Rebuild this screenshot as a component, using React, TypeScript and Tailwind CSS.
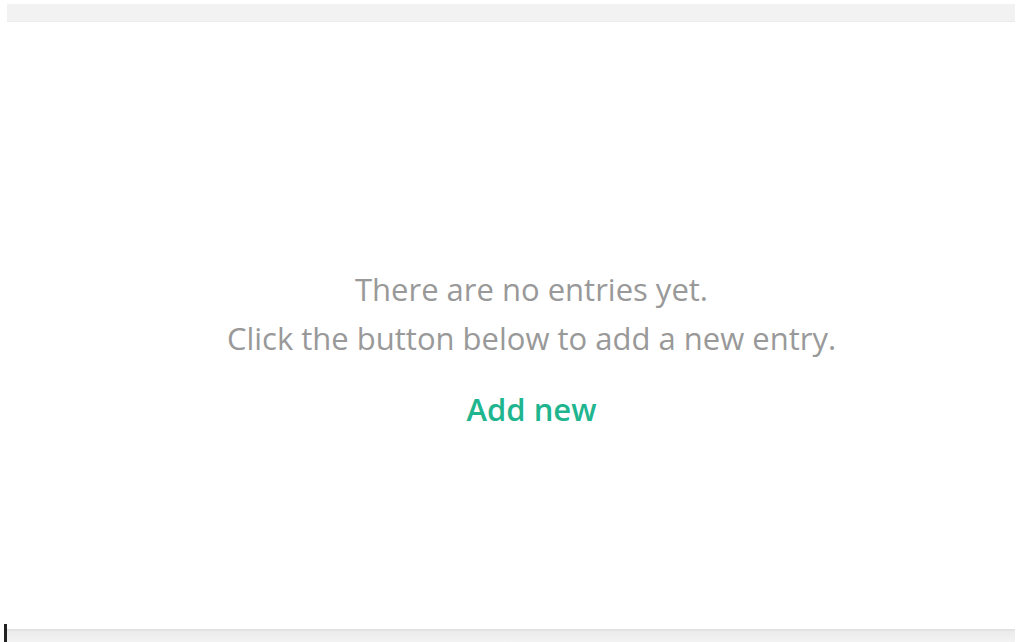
export default function App() {
  return (
    <div
      className="relative h-[642px] w-[1031px] overflow-hidden bg-white"
      style={{ fontFamily: '"Open Sans", sans-serif' }}
    >
      <div className="flex h-full flex-col pl-[7px] pr-[16px] pt-[4px]">
        <div className="h-[18px] shrink-0 border-b border-[#ececec] bg-[#f2f2f2]" />
        <div className="flex flex-1 flex-col items-center justify-center pl-[41px] pt-[47px] text-center">
          <p className="text-[31px] leading-[49px] text-[#999999]">
            There are no entries yet.
          </p>
          <p className="text-[31px] leading-[49px] text-[#999999]">
            Click the button below to add a new entry.
          </p>
          <button className="mt-[22px] text-[31px] font-semibold leading-[49px] text-[#1fb58f]">
            Add new
          </button>
        </div>
        <div className="h-[13px] shrink-0 border-t-2 border-[#e2e2e2] bg-gradient-to-b from-[#ebebeb] to-[#f3f3f3]" />
      </div>
      <div className="absolute bottom-0 left-[4px] h-[18px] w-[3px] bg-[#222222]" />
    </div>
  );
}
